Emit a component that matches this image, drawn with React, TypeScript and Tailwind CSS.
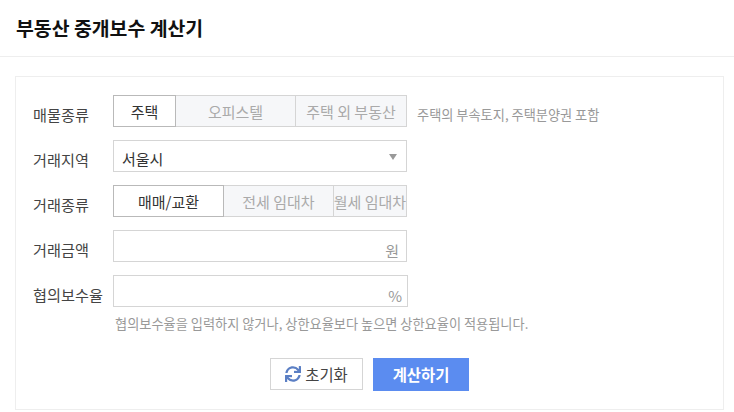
import { FaSync } from "react-icons/fa";

const font = "[font-family:'Noto_Sans_CJK_KR','Noto_Sans',sans-serif]";

const Row = ({ label, children }: { label: string; children: React.ReactNode }) => (
  <div className="flex h-8 items-center">
    <div className="w-20 pt-[8px] text-[15.2px] leading-none text-[#444]">{label}</div>
    {children}
  </div>
);

const Tab = ({ text, w, active }: { text: string; w: string; active?: boolean }) => (
  <div
    className={
      active
        ? `${w} flex h-full items-center justify-center border border-[#b9b9b9] bg-white pt-[2px] text-[15px] text-[#333]`
        : `${w} flex h-full items-center justify-center border border-l-0 border-[#d5d5d5] bg-[#f6f7f9] pt-[2px] text-[15px] text-[#aaa]`
    }
  >
    <span className="whitespace-nowrap">{text}</span>
  </div>
);

const App = () => {
  return (
    <div className={`h-[412px] w-[734px] overflow-hidden bg-white ${font}`}>
      <header className="flex h-[57px] items-center border-b border-[#eeeeee] pl-4">
        <h1 className="text-[19.4px] font-bold leading-none text-[#111]">부동산 중개보수 계산기</h1>
      </header>

      <div className="ml-[15px] mt-[19px] h-[334px] w-[709px] border border-[#eeeeee] pl-[17px] pt-[18px]">
        <div className="flex flex-col gap-[13px]">
          <Row label="매물종류">
            <div className="flex h-8 w-[294px]">
              <Tab text="주택" w="w-[63px]" active />
              <Tab text="오피스텔" w="w-[120px]" />
              <Tab text="주택 외 부동산" w="w-[111px]" />
            </div>
            <span className="ml-[10px] pt-[8px] text-[13.2px] text-[#999]">주택의 부속토지, 주택분양권 포함</span>
          </Row>

          <Row label="거래지역">
            <div className="flex h-8 w-[294px] items-center justify-between border border-[#d5d5d5] pl-2 pr-[9px]">
              <span className="pt-[6px] text-[15px] text-[#333]">서울시</span>
              <span className="mt-[1px] h-0 w-0 border-x-[4.5px] border-t-[6px] border-x-transparent border-t-[#999]" />
            </div>
          </Row>

          <Row label="거래종류">
            <div className="flex h-8 w-[294px]">
              <Tab text="매매/교환" w="w-[111px]" active />
              <Tab text="전세 임대차" w="w-[110px]" />
              <Tab text="월세 임대차" w="w-[73px]" />
            </div>
          </Row>

          <Row label="거래금액">
            <div className="flex h-8 w-[294px] items-end justify-end border border-[#d5d5d5] pr-[7px]">
              <span className="text-[15px] leading-[21px] text-[#999]">원</span>
            </div>
          </Row>

          <Row label="협의보수율">
            <div className="flex h-8 w-[295px] items-end justify-end border border-[#d5d5d5] pr-[5px]">
              <span className="text-[15px] leading-[21px] text-[#999]">%</span>
            </div>
          </Row>
        </div>

        <p className="ml-[82px] mt-[9px] text-[13.2px] leading-[16px] text-[#999]">
          협의보수율을 입력하지 않거나, 상한요율보다 높으면 상한요율이 적용됩니다.
        </p>

        <div className="ml-[237px] mt-[26px] flex gap-[10px]">
          <button className="flex h-8 w-[93px] items-center justify-center gap-[4px] border border-[#d5d5d5] bg-white text-[15.4px] text-[#444]">
            <FaSync className="h-4 w-4 text-[#5b7fc4]" />
            <span className="pt-[2px]">초기화</span>
          </button>
          <button className="h-[33px] w-24 bg-[#5b8cf0] text-[15.4px] font-bold text-white">계산하기</button>
        </div>
      </div>
    </div>
  );
};

export default App;
